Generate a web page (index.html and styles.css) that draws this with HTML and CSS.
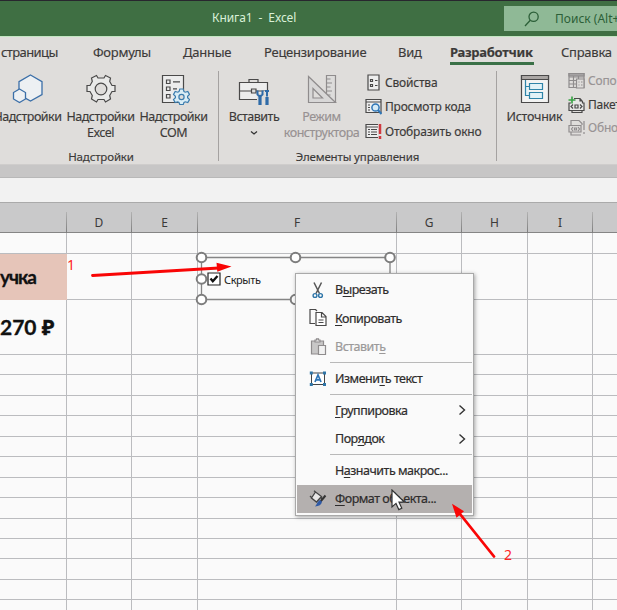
FILE: index.html
```html
<!DOCTYPE html>
<html lang="ru">
<head>
<meta charset="utf-8">
<title>Книга1 - Excel</title>
<link rel="stylesheet" href="styles.css">
</head>
<body>
<div class="window">
  <header class="titlebar">
    <div class="doc">Книга1&nbsp; -&nbsp; Excel</div>
    <div class="search">
      <svg width="16" height="16" viewBox="0 0 16 16"><circle cx="9.6" cy="5.8" r="4.6"/><path d="M6.3 9.2 1 15"/></svg>
      <span>Поиск (Alt+</span>
    </div>
  </header>

  <nav class="tabs">
    <span>страницы</span><span>Формулы</span><span>Данные</span><span>Рецензирование</span><span>Вид</span><span class="active">Разработчик</span><span>Справка</span>
  </nav>

  <section class="ribbon">
    <div class="group addins">
      <div class="tools">
        <div class="big">
          <svg width="32" height="32" viewBox="0 0 32 32" class="blue"><path fill="#edf0f3" d="M18.500 2 30 8.600V21.500L18.500 28 7 21.500V8.600Z"/><path fill="#edf0f3" d="M7.500 16 13.500 19.500V26L7.500 29.500 1.500 26V19.500Z"/></svg>
          <span>Надстройки</span>
        </div>
        <div class="big">
          <svg width="32" height="32" viewBox="0 0 32 32" class="dark"><path fill="#e9e9e8" d="M11.500 2.500 13 5h6l1.500-2.500L25.500 5l-.8 3.500 2.300 4H30v6h-3l-2.300 4 .8 3.500-5 3L19 26.500h-6L11.500 29l-5-3 .8-3.500-2.300-4H2v-6h3l2.300-4L6.500 5Z"/><circle cx="16" cy="16" r="5.800" fill="#dfdddb"/></svg>
          <span>Надстройки<br>Excel</span>
        </div>
        <div class="big">
          <svg width="32" height="32" viewBox="0 0 32 32" class="dark"><path fill="#ececec" d="M4.500 2.500h21v27h-21Z"/><path fill="none" d="M8.500 7h3.500v3.500H8.500ZM8.500 14h3.500v3.500H8.500ZM8.500 21.500h3.500V25H8.500ZM15 8.800h7M15 15.800h4"/><path fill="#d9edf6" stroke="#3a7cae" d="M21.800 16h3.400l.8 2.600 1.200.6 2.600-.8 1.700 3-1.900 1.900v1.400l1.900 1.900-1.700 3-2.600-.8-1.200.6-.8 2.300h-3.400l-.8-2.300-1.200-.6-2.600.8-1.700-3 1.900-1.900v-1.400l-1.900-1.900 1.700-3 2.600.8 1.200-.6Z"/><circle cx="23.500" cy="24" r="2.600" fill="#dfdddb" stroke="#3a7cae"/></svg>
          <span>Надстройки<br>COM</span>
        </div>
      </div>
      <div class="caption">Надстройки</div>
    </div>

    <div class="group controls">
      <div class="tools">
        <div class="big insert">
          <svg width="32" height="32" viewBox="0 0 32 32" class="dark"><path fill="#ededed" d="M1.500 9.500h28v17h-28Z"/><path fill="none" d="M11 9V6.500h9V9M1.500 18h12M18 18h11"/><path fill="#dfdddb" d="M13.500 16h4.500v4h-4.500Z"/><path fill="none" stroke="#dfdddb" stroke-width="7" d="M22.500 20v12M29 18v14"/><path fill="none" stroke="#2f6ba8" stroke-width="2" d="M19.500 17.500v4l2.500 2 2.500-2v-4"/><path fill="none" stroke="#2f6ba8" stroke-width="3.200" d="M22 23v9M29 24v8"/><path fill="none" stroke="#2f6ba8" stroke-width="2" d="M29 17.500v6M27 18h4"/></svg>
          <span>Вставить</span>
          <svg class="chev" width="8" height="6" viewBox="0 0 8 6"><path d="m1 1.500 3 2.500 3-2.500"/></svg>
        </div>
        <div class="big design">
          <svg width="32" height="32" viewBox="0 0 32 32" class="grey"><path fill="#dddcdb" d="M20.500 2.500h9v27h-9Z"/><path fill="none" d="M20.500 6h4M20.500 10h5.500M20.500 14h4M20.500 18h5.500M20.500 22h4"/><path fill="#d8d7d7" d="M2.500 3.500v26h27Z"/><path fill="#dfdddb" d="M7 15.500v9.500h9.500Z"/></svg>
          <span>Режим<br>конструктора</span>
        </div>
        <div class="list">
          <div><svg width="17" height="17" viewBox="0 0 17 17" class="dark"><path fill="#eee" d="M3 1h11v15H3Z"/><path fill="none" d="M5.500 5.500h2v2h-2ZM5.500 10.500h2v2h-2ZM10 6.500h2.500M10 11.500h2.500"/></svg><span>Свойства</span></div>
          <div><svg width="17" height="17" viewBox="0 0 17 17" class="dark"><path fill="#eee" d="M1 1.500h15v13H1Z"/><path fill="none" d="M1 4h15M3 7h2M3 9.500h2M3 12h2"/><circle cx="10.500" cy="9.500" r="3.600" fill="#d5eaf6" stroke="#2e75b6" stroke-width="1.500"/><path stroke="#2e75b6" stroke-width="2" d="m13 12 3.500 4"/></svg><span>Просмотр кода</span></div>
          <div><svg width="17" height="17" viewBox="0 0 17 17" class="dark"><path fill="#eee" d="M13 14.500H1v-13h12"/><path fill="none" d="M1 4h12M3 6.500h2M6 6.500h6M3 9h2M6 9h6M3 11.500h2M6 11.500h6"/><path stroke="#cf3a40" stroke-width="2.500" d="M15 1v10M15 13v3"/></svg><span>Отобразить окно</span></div>
        </div>
      </div>
      <div class="caption">Элементы управления</div>
    </div>

    <div class="group xml">
      <div class="tools">
        <div class="big source">
          <svg width="32" height="32" viewBox="0 0 32 32" class="dark"><path fill="#f3f3f2" d="M2.500 2.500h27v27h-27Z"/><path fill="#aaa6a4" d="M2.500 2.500h27v4h-27Z"/><path fill="#e2f2f7" stroke="#2f84a8" d="M10.500 10.500h13v6h-13ZM10.500 19.500h13v6h-13ZM6.500 7v15.500h4M6.500 13.500h4"/></svg>
          <span>Источник</span>
        </div>
        <div class="list">
          <div class="off"><svg width="17" height="17" viewBox="0 0 17 17" class="grey"><path fill="none" d="M1 1.500h15v14H1ZM1 5h15M1 8.500h7M1 12h7M5.500 1.500v14M10.500 1.500V7"/><path fill="#a5a2a3" d="M1 1.500h15V4H1Z"/><path fill="#dfdddb" d="M8.500 7h7.500v9H8.500ZM10.500 10h1M13 10h1.500M10.500 13h1M13 13h1.500"/></svg><span>Сопо</span></div>
          <div><svg width="17" height="17" viewBox="0 0 17 17" class="dark"><path fill="#e7e7e6" d="M6 2.500h6l2.500 3V7H16v7.500H1V7h2M12 2.500V5h2"/><path fill="none" d="m5 8.500-2 2 2 2M12 8.500l2 2-2 2M7 9h3v3H7ZM4 14.500v2h10v-2"/><path stroke="#37a244" stroke-width="1.600" d="M4 .5v7M.5 4h7"/></svg><span>Пакет</span></div>
          <div class="off"><svg width="17" height="17" viewBox="0 0 17 17" class="grey"><path fill="none" d="M3 6.500v-5h8l3 3V6M1 6.500h12V13H1ZM5 8 3.500 10 5 12M10 8l1.500 2L10 12M6.500 9h2v2h-2ZM3 13v3h10M16 2v9M16 13v2"/></svg><span>Обно</span></div>
        </div>
      </div>
    </div>
  </section>

  <div class="formula-bar"></div>

  <main class="sheet">
    <div class="row head"><b></b><b>D</b><b>E</b><b>F</b><b>G</b><b>H</b><b>I</b><b></b></div>
    <div class="row first"><i></i><i></i><i></i><i></i><i></i><i></i><i></i><i></i></div>
    <div class="row title"><i class="filled">учка</i><i></i><i></i><i></i><i></i><i></i><i></i><i></i></div>
    <div class="row sum"><i>270 ₽</i><i></i><i></i><i></i><i></i><i></i><i></i><i></i></div>
    <div class="row"><i></i><i></i><i></i><i></i><i></i><i></i><i></i><i></i></div>
    <div class="row"><i></i><i></i><i></i><i></i><i></i><i></i><i></i><i></i></div>
    <div class="row"><i></i><i></i><i></i><i></i><i></i><i></i><i></i><i></i></div>
    <div class="row"><i></i><i></i><i></i><i></i><i></i><i></i><i></i><i></i></div>
    <div class="row"><i></i><i></i><i></i><i></i><i></i><i></i><i></i><i></i></div>
    <div class="row"><i></i><i></i><i></i><i></i><i></i><i></i><i></i><i></i></div>
    <div class="row"><i></i><i></i><i></i><i></i><i></i><i></i><i></i><i></i></div>
    <div class="row"><i></i><i></i><i></i><i></i><i></i><i></i><i></i><i></i></div>
    <div class="row"><i></i><i></i><i></i><i></i><i></i><i></i><i></i><i></i></div>
    <div class="row"><i></i><i></i><i></i><i></i><i></i><i></i><i></i><i></i></div>
    <div class="row"><i></i><i></i><i></i><i></i><i></i><i></i><i></i><i></i></div>
    <div class="row"><i></i><i></i><i></i><i></i><i></i><i></i><i></i><i></i></div>
    <div class="row"><i></i><i></i><i></i><i></i><i></i><i></i><i></i><i></i></div>
  </main>

  <div class="checkbox">
    <svg class="frame" width="204" height="56" viewBox="0 0 204 56"><path d="M7.500 7.500h188.500v42H7.500Z"/><circle cx="7.500" cy="7.500" r="4.800"/><circle cx="101.500" cy="7.500" r="4.800"/><circle cx="196" cy="7.500" r="4.800"/><circle cx="7.500" cy="29" r="4.800"/><circle cx="7.500" cy="49.500" r="4.800"/><circle cx="101.500" cy="49.500" r="4.800"/></svg>
    <div class="field">
      <svg width="14" height="14" viewBox="0 0 14 14"><path fill="#fff" stroke="#222" stroke-width="1.200" d="M1 1h12v12H1Z"/><path fill="none" stroke="#111" stroke-width="2.300" d="m3.500 6.500 2.300 2.700L10.500 4"/></svg>
      <span>Скрыть</span>
    </div>
  </div>

  <div class="menu">
    <div class="item"><svg width="18" height="18" viewBox="0 0 18 18"><path stroke="#555" stroke-width="1.500" fill="none" d="m5 1.500 5.500 11M12.500 1.500 7 12.500"/><g fill="none" stroke="#2e75a8" stroke-width="1.400"><circle cx="6" cy="14.500" r="1.900"/><circle cx="11.500" cy="14.500" r="1.900"/></g></svg><span>В<u>ы</u>резать</span></div>
    <div class="item"><svg width="18" height="18" viewBox="0 0 18 18" class="dark"><path fill="none" d="M6 14.500H1v-14h5.500L8 2"/><path fill="#fff" d="M7 3.500h6l4 4v9H7ZM12.500 3.500V8H17M9.500 11h5M9.500 13.500h5"/></svg><span><u>К</u>опировать</span></div>
    <div class="item off"><svg width="18" height="18" viewBox="0 0 18 18" class="grey"><path fill="#c8c7c7" d="M2.500 3h12v13h-12Z"/><path fill="#e6e6e6" d="M6 4V2h1.500V.800h2V2H11v2Z"/><path fill="#f2f2f2" d="M9.500 7.500h7v9h-7Z"/></svg><span>Вставит<u>ь</u></span></div>
    <hr>
    <div class="item"><svg width="18" height="18" viewBox="0 0 18 18"><path fill="#fff" stroke="#444" d="M2.500 3h13v11.500h-13Z"/><path fill="#2e75a8" d="M.8 1.500h3v3h-3ZM14 1.500h3v3h-3ZM.8 13h3v3h-3ZM14 13h3v3h-3Z"/><path fill="none" stroke="#2e75b6" stroke-width="1.700" d="m6 12 3-7 3 7M7 9.800h4"/></svg><span>Измени<u>т</u>ь текст</span></div>
    <hr>
    <div class="item"><span><u>Г</u>руппировка</span><svg class="arrow" width="8" height="12" viewBox="0 0 8 12"><path d="m1.500 1.500 5 4.500-5 4.500"/></svg></div>
    <div class="item"><span>Пор<u>я</u>док</span><svg class="arrow" width="8" height="12" viewBox="0 0 8 12"><path d="m1.500 1.500 5 4.500-5 4.500"/></svg></div>
    <hr>
    <div class="item"><span>Н<u>а</u>значить макрос...</span></div>
    <div class="item selected"><svg width="18" height="18" viewBox="0 0 18 18"><path fill="#e8e6e6" stroke="#444" stroke-width="1.300" d="m6.500 2 6 4.500-5 5.500-5-4ZM3 8 1 6M6.500 2 5 .8M12.500 6.500v3"/><path stroke="#333" stroke-width="2" d="m16.500 5.500-5 6"/><path fill="#305aa5" d="m11 10 2 1.800c-.5 3-3 4.500-7 4.700 1.800-1.500 2-5 5-6.500Z"/></svg><span><u>Ф</u>ормат объекта...</span></div>
  </div>

  <svg class="cursor" width="18" height="24" viewBox="0 0 18 24"><path d="M2 1v17l4-3.600 2.800 6.200 3-1.300L9 13.200h5.500Z"/></svg>

  <svg class="notes" width="617" height="610" viewBox="0 0 617 610"><path class="line" d="M92.500 275.500 219 268M494 556.500 460 514"/><path class="tip" d="m231.500 266.500-15-3.800.8 9ZM452 503.800l4.500 14 7.500-6.600Z"/></svg>
  <span class="num one">1</span>
  <span class="num two">2</span>
</div>
</body>
</html>
```
FILE: styles.css
```css
* { box-sizing: border-box; }
body { margin: 0; font-family: "Noto Sans", "Open Sans", sans-serif; color: #3c3a39; }
.window { position: relative; width: 617px; height: 610px; overflow: hidden; background: #fafafa; }

.titlebar { display: flex; align-items: center; height: 36px; border-top: 1px solid #28262e; background: #3f6f43; padding-left: 212px; }
.doc { width: 292px; color: #d9f0d8; font-size: 12px; letter-spacing: -.1px; line-height: 16px; padding-bottom: 2px; }
.search { flex: 1; height: 25px; display: flex; align-items: center; gap: 15px; padding-left: 20px; background: #8fb996; color: #2c5f38; font-size: 12px; white-space: nowrap; overflow: hidden; }
.search svg { flex: none; fill: none; stroke: #2c5f38; stroke-width: 1.300; }

.tabs { display: grid; grid-template-columns: 92px 90px 81px 134px 52px 111px 60px; padding-left: 1px; height: 30px; background: #dfdddb; border-top: 1px solid #c3e6c2; font-size: 13px; letter-spacing: -.25px; line-height: 30px; white-space: nowrap; -webkit-text-stroke: .15px; }
.tabs .active { justify-self: start; font-weight: 700; width: 84px; letter-spacing: -.3px; border-bottom: 3px solid #3a7047; height: 28px; }
.tabs span:first-child { letter-spacing: -.6px; }

.ribbon { display: flex; height: 99px; background: #dfdddb; padding-top: 5px; border-bottom: 1px solid #cfcdcc; -webkit-text-stroke: .15px; }
.group { position: relative; height: 90px; flex: none; }
.tools { display: flex; height: 76px; }
.big { display: flex; flex-direction: column; align-items: center; padding-top: 2px; flex: none; font-size: 12.500px; letter-spacing: -.5px; line-height: 16px; text-align: center; white-space: nowrap; }
.big span { margin-top: 4px; }
.dark { stroke: #4a4949; stroke-width: 1.200; }
.grey { stroke: #8f8c8d; stroke-width: 1.200; }
.blue { stroke: #3b6fa8; stroke-width: 1.300; }
.caption { font-size: 11.500px; letter-spacing: -.15px; line-height: 16px; text-align: center; padding-top: 2px; }
.addins { width: 219px; border-right: 1px solid #a5a2a1; }
.addins .tools { margin-left: -9px; }
.addins .big { width: 73px; }
.addins .caption { padding-right: 16px; }
.controls { width: 278px; border-right: 1px solid #a5a2a1; }
.controls .insert { width: 70px; }
.controls .design { width: 65px; color: #979192; }
.chev { margin-top: 5px; fill: none; stroke: #333; stroke-width: 1.300; }
.list { display: flex; flex-direction: column; font-size: 12px; letter-spacing: -.2px; white-space: nowrap; }
.list div { display: flex; align-items: center; gap: 3px; height: 24.500px; }
.list .off { color: #989394; }
.controls .list { padding-left: 11px; margin-top: -1px; }
.xml { width: 120px; }
.source { width: 75px; letter-spacing: -.25px; }
.xml .list { margin: -2px 0 0 -4px; }
.xml .list div { height: 23.500px; }

.formula-bar { height: 38px; background: #f2f2f2; border-top: 12px solid #c7c6c6; border-bottom: 1px solid #aaa; box-shadow: inset 0 1px #b8b8b8; }

.row { display: grid; grid-template-columns: 67px 65px 66px 199px 65px 66px 65px 66px; height: 20.450px; }
.row i { font-style: normal; border-right: 1px solid #bbbcbf; border-bottom: 1px solid #bbbcbf; }
.row.head { height: 30px; background: #c9c9ca; border-bottom: 1px solid #858585; }
.head b { font-size: 12px; font-weight: 400; line-height: 22px; margin-top: 9px; text-align: center; border-right: 1px solid; border-image: linear-gradient(#b5b5b5, #777) 1; }
.row.first { height: 20.500px; }
.row.title { height: 46px; }
.row.sum { height: 55.500px; }
.title i:first-child, .sum i:first-child { display: flex; align-items: center; color: #111; font-family: Lato, "Noto Sans", sans-serif; font-weight: 700; white-space: nowrap; }
.title i:first-child { font-size: 19px; letter-spacing: -1px; -webkit-text-stroke: .3px; }
.sum i:first-child { font-size: 21px; -webkit-text-stroke: .3px; }
.title .filled { background: #e6c5b9; border-color: #e6c5b9; }

.checkbox { position: absolute; left: 194px; top: 250px; width: 204px; height: 56px; }
.frame { position: absolute; inset: 0; fill: none; stroke: #858585; stroke-width: 1.300; }
.frame circle { fill: #fff; stroke: #7d7d7d; stroke-width: 2; }
.field { position: absolute; left: 13px; top: 22px; display: flex; align-items: center; gap: 3px; height: 14px; color: #222; font-size: 11px; letter-spacing: -.4px; }

.menu { position: absolute; left: 295px; top: 273px; width: 179px; height: 243px; padding: 1.500px 1px 1px; border: 1px solid #a9a9a9; background: #fafafa; box-shadow: 1px 1px 4px rgba(0,0,0,.35); color: #2e2c2c; font-size: 12.500px; letter-spacing: -.5px; white-space: nowrap; -webkit-text-stroke: .2px; }
.item { display: flex; align-items: center; height: 28.600px; padding: 0 6px 0 12px; }
.item > svg:first-child { margin-right: 8px; }
.item > span:first-child { margin-left: 26px; }
.item.off { color: #9b9999; }
.item.selected { background: #b4b0af; }
.item u { text-underline-offset: 2px; text-decoration-thickness: 1px; }
.item .arrow { margin-left: auto; fill: none; stroke: #333; stroke-width: 1.400; }
.menu hr { height: 1px; margin: 1px 0 1px 33px; border: 0; background: #b9b9b9; }

.cursor { position: absolute; left: 390px; top: 489px; fill: #fff; stroke: #333; stroke-width: 1.200; }
.notes { position: absolute; inset: 0; }
.line { fill: none; stroke: #f90505; stroke-width: 2.800; stroke-linecap: round; }
.tip { fill: #f90505; }
.num { position: absolute; color: #f22; font: 14px/16px "Noto Sans", sans-serif; }
.one { left: 67px; top: 257px; }
.two { left: 504px; top: 547px; }
```
